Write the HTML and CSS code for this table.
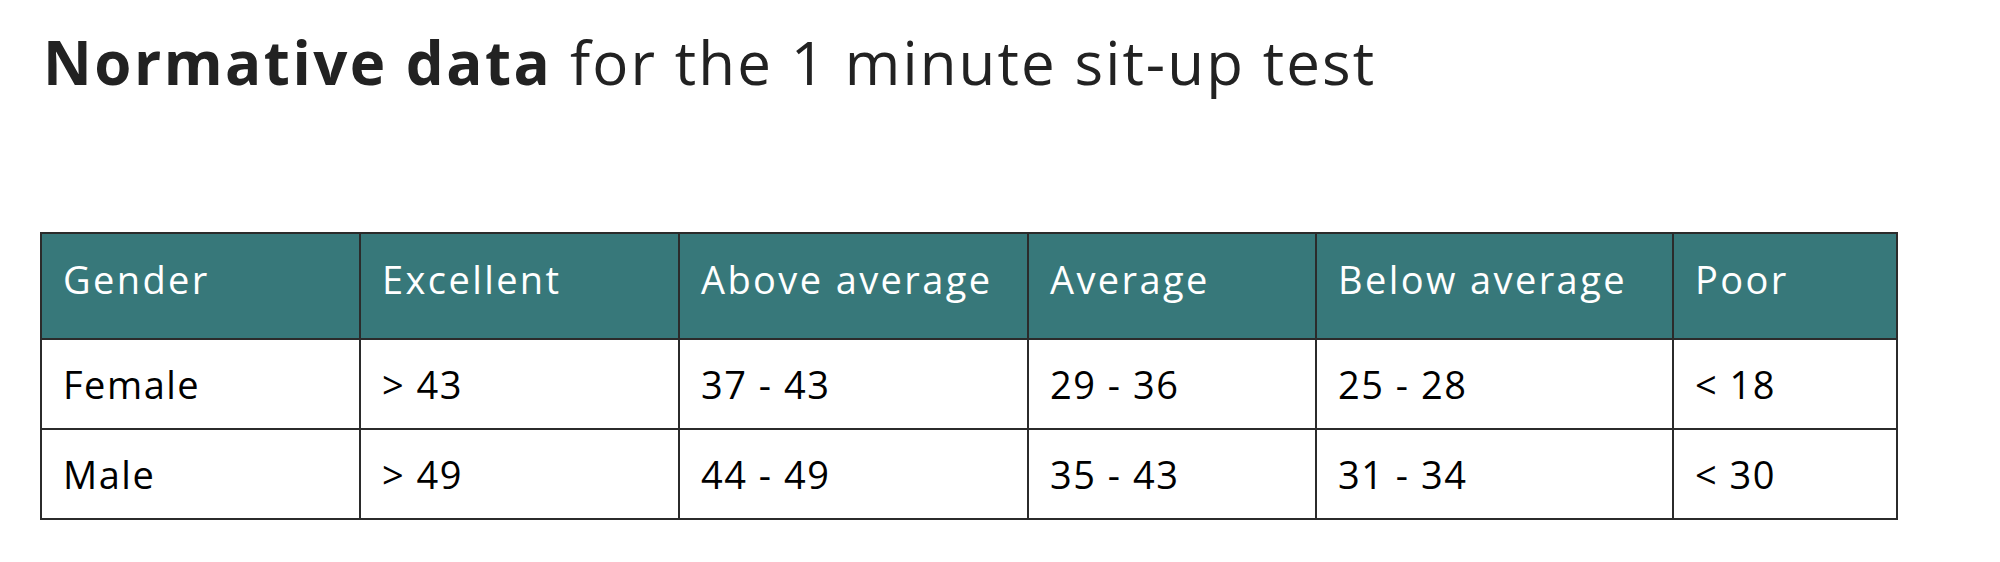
FILE: index.html
```html
<!DOCTYPE html>
<html>
<head>
<meta charset="utf-8">
<link rel="stylesheet" href="styles.css">
</head>
<body>
<main class="page">
  <h1 class="title"><strong>Normative data</strong> for the 1 minute sit-up test</h1>
  <table class="norms">
    <thead>
      <tr>
        <th class="c1">Gender</th>
        <th class="c2">Excellent</th>
        <th class="c3">Above average</th>
        <th class="c4">Average</th>
        <th class="c5">Below average</th>
        <th class="c6">Poor</th>
      </tr>
    </thead>
    <tbody>
      <tr>
        <td>Female</td>
        <td>&gt; 43</td>
        <td>37 - 43</td>
        <td>29 - 36</td>
        <td>25 - 28</td>
        <td>&lt; 18</td>
      </tr>
      <tr>
        <td>Male</td>
        <td>&gt; 49</td>
        <td>44 - 49</td>
        <td>35 - 43</td>
        <td>31 - 34</td>
        <td>&lt; 30</td>
      </tr>
    </tbody>
  </table>
</main>
</body>
</html>
```

FILE: styles.css
```css
html, body {
  margin: 0;
  padding: 0;
  background: #ffffff;
}

.page {
  padding: 0 0 0 40px;
  font-family: "Open Sans", Lato, sans-serif;
  font-variant-ligatures: none;
}

.title {
  margin: 0;
  padding: 26px 0 0 3px;
  font-size: 60px;
  line-height: 72px;
  font-weight: 400;
  color: #222222;
  letter-spacing: 2.1px;
}

.title strong {
  font-weight: 700;
  letter-spacing: 2.5px;
}

.norms {
  margin-top: 134px;
  width: 1858px;
  border-collapse: collapse;
  table-layout: fixed;
  font-size: 38px;
}

.norms th,
.norms td {
  border: 2px solid #2b2b2b;
  text-align: left;
  padding: 0 21px;
}

.norms th {
  background: #37787a;
  color: #ffffff;
  font-weight: 400;
  letter-spacing: 2.4px;
  height: 106px;
  vertical-align: top;
  padding-top: 19px;
  box-sizing: border-box;
}

.norms td {
  height: 88px;
  color: #000000;
  font-weight: 500;
  letter-spacing: 1.5px;
  vertical-align: middle;
}

.c1 { width: 319px; }
.c2 { width: 319px; }
.c3 { width: 349px; }
.c4 { width: 288px; }
.c5 { width: 357px; }
.c6 { width: 224px; }
```
